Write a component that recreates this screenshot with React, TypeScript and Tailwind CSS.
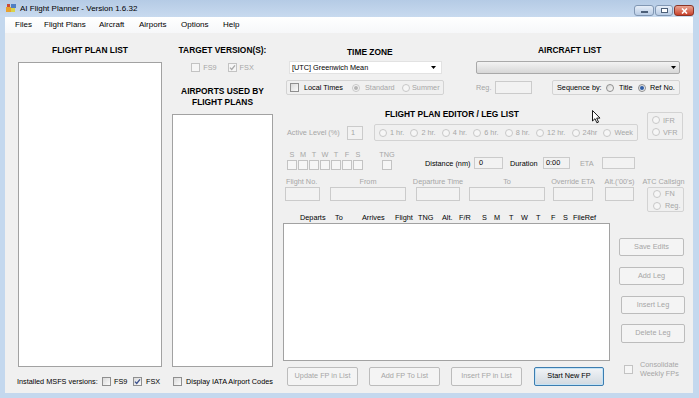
import React from "react";

const DIS = "text-[#a6a6a6]";

function T({ children, className = "" }: { children: React.ReactNode; className?: string }) {
  return <span className={`whitespace-nowrap text-[7.3px] leading-[9px] ${className}`}>{children}</span>;
}

function H({ children, className = "" }: { children: React.ReactNode; className?: string }) {
  return <span className={`whitespace-nowrap text-[8.4px] font-bold leading-[10px] text-black ${className}`}>{children}</span>;
}

function Check({ checked = false, disabled = false }: { checked?: boolean; disabled?: boolean }) {
  return (
    <span
      className={`flex h-[9px] w-[9px] shrink-0 items-center justify-center border ${
        disabled ? "border-[#c3c3c3] bg-[#f6f6f6]" : "border-[#8f8f8f] bg-gradient-to-br from-[#dadada] to-[#fbfbfb]"
      }`}
    >
      {checked && (
        <svg width="7" height="7" viewBox="0 0 7 7">
          <path d="M1 3.6 L2.7 5.4 L6 1.3" fill="none" stroke={disabled ? "#a9a9a9" : "#3a4f8c"} strokeWidth="1.3" />
        </svg>
      )}
    </span>
  );
}

function Radio({ checked = false, disabled = true, blue = false }: { checked?: boolean; disabled?: boolean; blue?: boolean }) {
  return (
    <span
      className={`flex h-[8px] w-[8px] shrink-0 items-center justify-center rounded-full border ${
        disabled ? "border-[#c8c8c8] bg-[#f6f6f6]" : "border-[#8f8f8f] bg-gradient-to-br from-[#d8d8d8] to-[#fafafa]"
      }`}
    >
      {checked && <span className={`h-[4px] w-[4px] rounded-full ${blue ? "bg-[#2f5ea6]" : "bg-[#b5b5b5]"}`} />}
    </span>
  );
}

function Btn({ children, className = "" }: { children: React.ReactNode; className?: string }) {
  return (
    <div
      className={`flex shrink-0 items-center justify-center rounded-[2px] border border-[#bcbcbc] bg-[#f4f4f4] text-[7.3px] text-[#a6a6a6] ${className}`}
    >
      {children}
    </div>
  );
}

function Box({ children, className = "" }: { children?: React.ReactNode; className?: string }) {
  return (
    <div className={`flex shrink-0 items-center border border-[#cbcbcb] bg-[#f2f2f2] px-[3px] text-[7.3px] leading-none ${className}`}>
      {children}
    </div>
  );
}

function Arrow() {
  return (
    <svg width="5" height="3" viewBox="0 0 5 3" className="shrink-0">
      <path d="M0 0 H5 L2.5 3 Z" fill="#000" />
    </svg>
  );
}

function AppIcon() {
  return (
    <svg width="11" height="10" viewBox="0 0 11 10">
      <rect x="0" y="4" width="5" height="5" fill="#e8a230" />
      <rect x="5" y="1" width="5" height="4" fill="#4f7fc4" />
      <rect x="5" y="5" width="4" height="4" fill="#d9d24a" />
      <rect x="1" y="1" width="3" height="3" fill="#c94b3a" />
    </svg>
  );
}

function Cursor() {
  return (
    <svg width="10" height="14" viewBox="0 0 10 14">
      <path d="M0.5 0.5 L0.5 11 L3 8.7 L4.9 12.8 L6.5 12.1 L4.7 8.1 L8 8.1 Z" fill="#fff" stroke="#000" strokeWidth="0.9" strokeLinejoin="round" />
    </svg>
  );
}

function Field({ label, className, start = false }: { label: string; className: string; start?: boolean }) {
  return (
    <div className={`flex shrink-0 flex-col ${start ? "items-start" : "items-center"} ${className}`}>
      <T className={`h-[9px] ${DIS} ${start ? "pl-[1px]" : ""}`}>{label}</T>
      <Box className="mt-[1px] h-[14px] w-full" />
    </div>
  );
}

export default function App() {
  const hours = ["1 hr.", "2 hr.", "4 hr.", "6 hr.", "8 hr.", "12 hr.", "24hr", "Week"];
  const days = ["S", "M", "T", "W", "T", "F", "S"];
  return (
    <div className="relative flex h-[398px] w-[699px] flex-col overflow-hidden bg-[#c4d8ee] font-['Liberation_Sans',Arial,sans-serif] text-black">
      {/* Title bar */}
      <div className="flex h-[17px] shrink-0 items-start bg-gradient-to-b from-[#b5cbe5] to-[#c8daef]">
        <div className="ml-[6px] mt-[3px]">
          <AppIcon />
        </div>
        <span className="ml-[3px] mt-[4px] whitespace-nowrap text-[8px] leading-[10px] text-black">AI Flight Planner - Version 1.6.32</span>
        <div className="ml-auto mr-[5px] mt-[5px] flex gap-[1px]">
          <div className="flex h-[11px] w-[20px] items-end justify-center rounded-[3px] border border-[#8197b3] bg-gradient-to-b from-[#e6eef8] to-[#b8cbe4] pb-[2px]">
            <span className="h-[2px] w-[7px] border border-[#4c5f78] bg-white" />
          </div>
          <div className="flex h-[11px] w-[18px] items-center justify-center rounded-[3px] border border-[#8197b3] bg-gradient-to-b from-[#e6eef8] to-[#b8cbe4]">
            <span className="h-[5px] w-[7px] border border-[#4c5f78] bg-white" />
          </div>
          <div className="flex h-[11px] w-[20px] items-center justify-center rounded-[3px] border border-[#8a3426] bg-gradient-to-b from-[#e8a493] to-[#c83f2a]">
            <svg width="7" height="6" viewBox="0 0 7 6">
              <path d="M1 0.5 L6 5.5 M6 0.5 L1 5.5" stroke="#fff" strokeWidth="1.6" />
            </svg>
          </div>
        </div>
      </div>

      {/* Client */}
      <div className="ml-[5px] flex w-[688px] flex-col">
        {/* Menu */}
        <div className="flex h-[16px] items-center bg-gradient-to-b from-[#ffffff] to-[#f6f7f9] text-[8px] leading-none">
          <span className="ml-[10px] w-[29px]">Files</span>
          <span className="w-[55px]">Flight Plans</span>
          <span className="w-[40px]">Aircraft</span>
          <span className="w-[42px]">Airports</span>
          <span className="w-[42px]">Options</span>
          <span>Help</span>
        </div>

        {/* Content */}
        <div className="flex h-[360px] items-start bg-[#f0f0f0]">
          {/* Left block */}
          <div className="ml-[13px] flex flex-col">
            <div className="flex">
              <div className="flex w-[144px] flex-col items-center">
                <H className="mt-[12px] h-[10px]">FLIGHT PLAN LIST</H>
                <div className="mt-[7px] h-[305px] w-[144px] border border-[#a2a2a2] bg-white" />
              </div>
              <div className="ml-[10px] flex w-[101px] flex-col items-center">
                <H className="mt-[12px] h-[10px]">TARGET VERSION(S):</H>
                <div className="mt-[7px] flex h-[10px] items-center">
                  <Check disabled />
                  <T className={`ml-[3px] ${DIS}`}>FS9</T>
                  <span className="ml-[11px]">
                    <Check disabled checked />
                  </span>
                  <T className={`ml-[3px] ${DIS}`}>FSX</T>
                </div>
                <div className="mt-[14px] flex flex-col items-center">
                  <H className="leading-[11px]">AIRPORTS USED BY</H>
                  <H className="leading-[11px]">FLIGHT PLANS</H>
                </div>
                <div className="mt-[6px] h-[253px] w-[101px] border border-[#a2a2a2] bg-white" />
              </div>
            </div>
            <div className="-ml-[1px] mt-[9px] flex h-[11px] items-center">
              <T className="w-[85px]">Installed MSFS versions:</T>
              <div className="flex w-[31px] items-center">
                <Check />
                <T className="ml-[3px]">FS9</T>
              </div>
              <div className="flex w-[40px] items-center">
                <Check checked />
                <T className="ml-[4px]">FSX</T>
              </div>
              <div className="flex items-center">
                <Check />
                <T className="ml-[4px]">Display IATA Airport Codes</T>
              </div>
            </div>
          </div>

          {/* Right block */}
          <div className="ml-[10px] flex w-[403px] flex-col">
            {/* Row A headings */}
            <div className="mt-[12px] flex h-[10px] items-center">
              <div className="w-[255px] pl-[64px]">
                <H>TIME ZONE</H>
              </div>
              <H>AIRCRAFT LIST</H>
            </div>
            {/* Row B combos */}
            <div className="mt-[6px] flex h-[13px]">
              <div className="ml-[6px] flex h-[13px] w-[153px] items-center border border-[#e2e2e2] bg-white pl-[2px] pr-[5px]">
                <T className="leading-none">[UTC] Greenwich Mean</T>
                <span className="ml-auto">
                  <Arrow />
                </span>
              </div>
              <div className="ml-[34px] flex h-[13px] w-[204px] items-center rounded-[2px] border border-[#a9a9a9] bg-gradient-to-b from-[#f3f3f3] to-[#d7d7d7] pr-[3px]">
                <span className="ml-auto">
                  <Arrow />
                </span>
              </div>
            </div>
            {/* Row C */}
            <div className="mt-[6px] flex h-[15px] items-center">
              <div className="ml-[3px] flex h-[15px] w-[158px] items-center rounded-[2px] border border-[#d3d3d3] pl-[3px]">
                <Check />
                <T className="ml-[5px] w-[48px]">Local Times</T>
                <Radio checked />
                <T className={`ml-[5px] w-[37px] ${DIS}`}>Standard</T>
                <Radio />
                <T className={`ml-[2px] ${DIS}`}>Summer</T>
              </div>
              <T className={`ml-[32px] w-[19px] ${DIS}`}>Reg.</T>
              <Box className="h-[13px] w-[37px]" />
              <div className="ml-[20px] flex h-[15px] w-[128px] items-center rounded-[2px] border border-[#d3d3d3] pl-[4px]">
                <T className="w-[49px]">Sequence by:</T>
                <Radio disabled={false} />
                <T className="ml-[5px] w-[19px]">Title</T>
                <Radio disabled={false} checked blue />
                <T className="ml-[4px]">Ref No.</T>
              </div>
            </div>
            {/* Row DE */}
            <div className="mt-[14px] flex">
              <div className="relative flex w-[364px] flex-col">
                <H className="h-[9px] pl-[102px] leading-[9px]">FLIGHT PLAN EDITOR / LEG LIST</H>
                <div className="absolute left-[309px] top-[1px]">
                  <Cursor />
                </div>
                <div className="mt-[5px] flex h-[19px] items-center">
                  <T className={`ml-[4px] w-[60px] ${DIS}`}>Active Level (%)</T>
                  <Box className={`h-[14px] w-[16px] ${DIS}`}>1</Box>
                  <div className="ml-[11px] flex h-[17px] w-[264px] items-center justify-between rounded-[2px] border border-[#d3d3d3] px-[4px]">
                    {hours.map((h) => (
                      <div key={h} className="flex items-center">
                        <Radio />
                        <T className={`ml-[3px] ${DIS}`}>{h}</T>
                      </div>
                    ))}
                  </div>
                </div>
              </div>
              <div className="mt-[3px] flex h-[28px] w-[36px] flex-col justify-center gap-[4px] rounded-[2px] border border-[#d3d3d3] pl-[4px]">
                <div className="flex h-[8px] items-center">
                  <Radio />
                  <T className={`ml-[3px] ${DIS}`}>IFR</T>
                </div>
                <div className="flex h-[8px] items-center">
                  <Radio />
                  <T className={`ml-[3px] ${DIS}`}>VFR</T>
                </div>
              </div>
            </div>
            {/* Row F */}
            <div className="mt-[8px] flex h-[20px] items-end">
              <div className="ml-[4px] flex w-[76px] flex-col">
                <div className="grid h-[8px] grid-cols-7 gap-x-[1px]">
                  {days.map((d, i) => (
                    <T key={i} className={`text-center leading-[8px] ${DIS}`}>
                      {d}
                    </T>
                  ))}
                </div>
                <div className="mt-[2px] grid h-[10px] grid-cols-7 gap-x-[1px]">
                  {days.map((d, i) => (
                    <span key={i} className="h-[10px] border border-[#c3c3c3] bg-[#f6f6f6]" />
                  ))}
                </div>
              </div>
              <div className="ml-[16px] flex w-[16px] flex-col items-center">
                <T className={`h-[8px] leading-[8px] ${DIS}`}>TNG</T>
                <span className="mt-[2px] h-[10px] w-[10px] border border-[#c3c3c3] bg-[#f6f6f6]" />
              </div>
              <div className="mb-[1px] flex h-[12px] items-center">
                <T className="ml-[30px] w-[49px]">Distance (nm)</T>
                <Box className="h-[12px] w-[29px] border-[#bdbdbd] pl-[4px]">0</Box>
                <T className="ml-[7px] w-[33px]">Duration</T>
                <Box className="h-[12px] w-[27px] border-[#bdbdbd] pl-[2px]">0:00</Box>
                <T className={`ml-[10px] w-[22px] ${DIS}`}>ETA</T>
                <Box className="h-[12px] w-[33px]" />
              </div>
            </div>
            {/* Row G */}
            <div className="mt-[7px] flex h-[35px] items-start">
              <Field label="Flight No." className="ml-[2px] w-[35px]" start />
              <Field label="From" className="ml-[10px] w-[76px]" />
              <Field label="Departure Time" className="ml-[10px] w-[44px]" />
              <Field label="To" className="ml-[9px] w-[76px]" />
              <Field label="Override ETA" className="ml-[8px] w-[40px]" />
              <Field label="Alt.('00's)" className="ml-[12px] w-[29px]" />
              <div className="ml-[9px] flex w-[41px] flex-col items-center">
                <T className={`h-[9px] ${DIS}`}>ATC Callsign</T>
                <div className="mt-[1px] flex h-[25px] w-[37px] flex-col justify-center gap-[4px] self-end rounded-[2px] border border-[#d3d3d3] pl-[5px]">
                  <div className="flex h-[8px] items-center">
                    <Radio />
                    <T className={`ml-[4px] ${DIS}`}>FN</T>
                  </div>
                  <div className="flex h-[8px] items-center">
                    <Radio />
                    <T className={`ml-[4px] ${DIS}`}>Reg.</T>
                  </div>
                </div>
              </div>
            </div>
            {/* Row H headers */}
            <div className="flex h-[11px] items-center">
              <T className="ml-[17px] w-[35px]">Departs</T>
              <T className="w-[27px]">To</T>
              <T className="w-[33px]">Arrives</T>
              <T className="w-[23px]">Flight</T>
              <T className="w-[24px]">TNG</T>
              <T className="w-[17px]">Alt.</T>
              <T className="w-[23px]">F/R</T>
              <T className="w-[12px]">S</T>
              <T className="w-[15px]">M</T>
              <T className="w-[12px]">T</T>
              <T className="w-[15px]">W</T>
              <T className="w-[15px]">T</T>
              <T className="w-[12px]">F</T>
              <T className="w-[10px]">S</T>
              <T>FileRef</T>
            </div>
            {/* Row IJ */}
            <div className="flex">
              <div className="flex w-[327px] flex-col">
                <div className="h-[138px] w-[327px] border border-[#a2a2a2] bg-white" />
                <div className="mt-[6px] flex h-[19px]">
                  <Btn className="ml-[4px] h-[19px] w-[71px]">Update FP in List</Btn>
                  <Btn className="ml-[11px] h-[19px] w-[71px]">Add FP To List</Btn>
                  <Btn className="ml-[11px] h-[19px] w-[71px]">Insert FP in List</Btn>
                  <div className="ml-[12px] flex h-[19px] w-[70px] items-center justify-center rounded-[2px] border border-[#3c7db0] bg-gradient-to-b from-[#f1f4f7] to-[#d2d9e0] text-[7.3px] text-black shadow-[inset_0_0_0_1px_#c4e3f6]">
                    Start New FP
                  </div>
                </div>
              </div>
              <div className="ml-[9px] flex flex-col">
                <Btn className="mt-[15px] h-[18px] w-[65px]">Save Edits</Btn>
                <Btn className="mt-[11px] h-[18px] w-[65px]">Add Leg</Btn>
                <Btn className="ml-[2px] mt-[11px] h-[18px] w-[64px]">Insert Leg</Btn>
                <Btn className="ml-[2px] mt-[10px] h-[19px] w-[64px]">Delete Leg</Btn>
                <div className="ml-[5px] mt-[17px] flex items-center">
                  <Check disabled />
                  <div className="ml-[7px] flex flex-col">
                    <T className={DIS}>Consolidate</T>
                    <T className={DIS}>Weekly FPs</T>
                  </div>
                </div>
              </div>
            </div>
          </div>
        </div>
      </div>
    </div>
  );
}
